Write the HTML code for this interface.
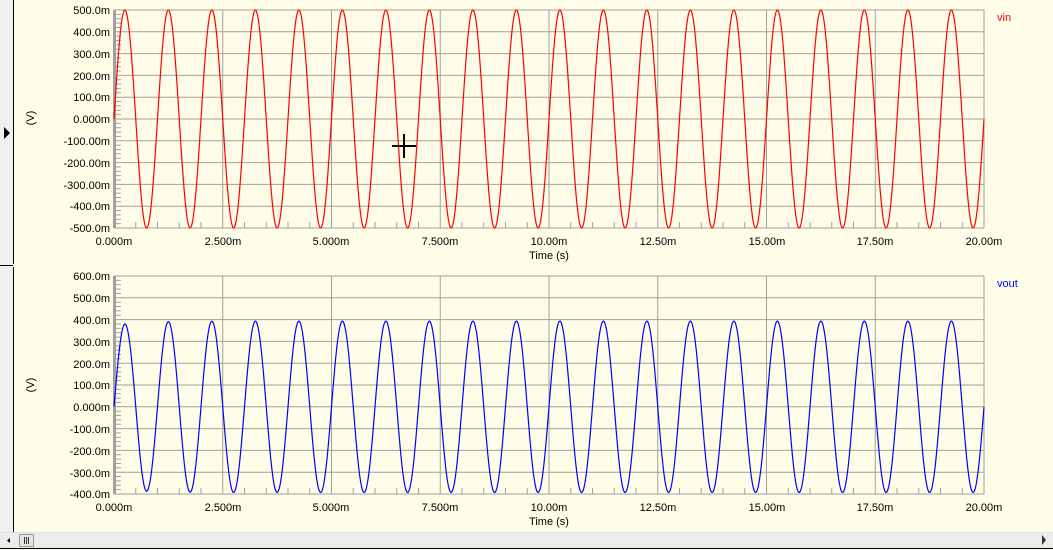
<!DOCTYPE html>
<html><head><style>
html,body{margin:0;padding:0;background:#fffde8;width:1053px;height:550px;overflow:hidden;font-family:"Liberation Sans",sans-serif}
svg text{font-family:"Liberation Sans",sans-serif;font-size:11px;fill:#000}
</style></head><body>
<svg id="s" width="1053" height="550" xmlns="http://www.w3.org/2000/svg">
<rect x="0" y="0" width="1053" height="550" fill="#fffde8"/>
<rect x="0" y="0" width="13" height="532" fill="#f0f0f0"/>
<line x1="13.5" y1="0" x2="13.5" y2="264" stroke="#000"/>
<line x1="0" y1="265.5" x2="13" y2="265.5" stroke="#000"/>
<line x1="13.5" y1="267" x2="13.5" y2="532" stroke="#000"/>
<polygon points="4,127 10,133 4,139" fill="#000"/>
<g id="g1"></g><g id="g2"></g>
<g text-anchor="end">
<text x="110" y="14">500.0m</text><text x="110" y="36">400.0m</text><text x="110" y="58">300.0m</text><text x="110" y="80">200.0m</text><text x="110" y="101">100.0m</text><text x="110" y="123">0.000m</text><text x="110" y="145">-100.00m</text><text x="110" y="167">-200.00m</text><text x="110" y="189">-300.00m</text><text x="110" y="210">-400.0m</text><text x="110" y="232">-500.0m</text>
<text x="110" y="280">600.0m</text><text x="110" y="302">500.0m</text><text x="110" y="324">400.0m</text><text x="110" y="346">300.0m</text><text x="110" y="368">200.0m</text><text x="110" y="389">100.0m</text><text x="110" y="411">0.000m</text><text x="110" y="433">-100.0m</text><text x="110" y="455">-200.0m</text><text x="110" y="477">-300.0m</text><text x="110" y="498">-400.0m</text>
</g>
<g text-anchor="middle">
<text x="114" y="245">0.000m</text><text x="223" y="245">2.500m</text><text x="331" y="245">5.000m</text><text x="440" y="245">7.500m</text><text x="549" y="245">10.00m</text><text x="658" y="245">12.50m</text><text x="767" y="245">15.00m</text><text x="875" y="245">17.50m</text><text x="984" y="245">20.00m</text>
<text x="549" y="259">Time (s)</text>
<text x="114" y="511">0.000m</text><text x="223" y="511">2.500m</text><text x="331" y="511">5.000m</text><text x="440" y="511">7.500m</text><text x="549" y="511">10.00m</text><text x="658" y="511">12.50m</text><text x="767" y="511">15.00m</text><text x="875" y="511">17.50m</text><text x="984" y="511">20.00m</text>
<text x="549" y="525">Time (s)</text>
</g>
<text x="0" y="0" transform="translate(34,118) rotate(-90)" text-anchor="middle">(V)</text>
<text x="0" y="0" transform="translate(34,385) rotate(-90)" text-anchor="middle">(V)</text>
<text x="997" y="21" style="fill:#ff0000">vin</text>
<text x="997" y="287" style="fill:#0000ff">vout</text>
<line x1="392" y1="146" x2="416" y2="146" stroke="#000" stroke-width="2"/>
<line x1="404" y1="134" x2="404" y2="158" stroke="#000" stroke-width="2"/>
<rect x="0" y="532" width="1053" height="16" fill="#ececec"/>
<line x1="0" y1="532.5" x2="1053" y2="532.5" stroke="#e0e0e0"/>
<line x1="0" y1="548.5" x2="1053" y2="548.5" stroke="#000"/>
<polygon points="10,540 7,537.5 10,535" fill="#000" transform="translate(0,3)"/>
<rect x="19.5" y="534.5" width="14" height="12" fill="#e4e4e4" stroke="#999" rx="1"/>
<line x1="24.5" y1="537" x2="24.5" y2="544" stroke="#333"/><line x1="26.5" y1="537" x2="26.5" y2="544" stroke="#333"/><line x1="28.5" y1="537" x2="28.5" y2="544" stroke="#333"/>
<polygon points="1042,535 1046,540 1042,545" fill="#333"/>
</svg>
<script>
function plot(gid,top,bot,col,fn){
 var g=document.getElementById(gid),L=114,R=984,h='';
 for(var i=0;i<=10;i++){var y=top+(bot-top)*i/10;h+='<line x1="'+L+'" y1="'+y+'" x2="'+R+'" y2="'+y+'" stroke="#a0a0a0"/>';
  if(i<10)for(var k=1;k<5;k++){var yy=y+(bot-top)/50*k;h+='<line x1="'+L+'" y1="'+yy+'" x2="'+(L+7)+'" y2="'+yy+'" stroke="#a0a0a0"/>';}}
 for(var i=0;i<=8;i++){var x=L+(R-L)*i/8;h+='<line x1="'+x+'" y1="'+top+'" x2="'+x+'" y2="'+bot+'" stroke="#a0a0a0"/>';
  if(i<8)for(var k=1;k<5;k++){var xx=x+(R-L)/40*k;h+='<line x1="'+xx+'" y1="'+(bot-6)+'" x2="'+xx+'" y2="'+bot+'" stroke="#a0a0a0"/>';}}
 h+='<rect x="'+(L-1)+'" y="'+top+'" width="3" height="'+(bot-top)+'" fill="#a0a0a0"/>';
 var p='';for(var x=0;x<=R-L;x+=0.5){var t=x/(R-L)*20;p+=(L+x)+','+fn(t)+' ';}
 h+='<polyline points="'+p+'" fill="none" stroke="'+col+'" stroke-width="1.2"/>';
 g.innerHTML=h;
}
plot('g1',10,228,'#ff0000',function(t){return 119-218*0.5*Math.sin(2*Math.PI*t);});
plot('g2',276,494,'#0000ff',function(t){var a=0.393-0.02*Math.exp(-t/0.6);return 276+21.8*6-218*a*Math.sin(2*Math.PI*t);});
</script>
</body></html>
